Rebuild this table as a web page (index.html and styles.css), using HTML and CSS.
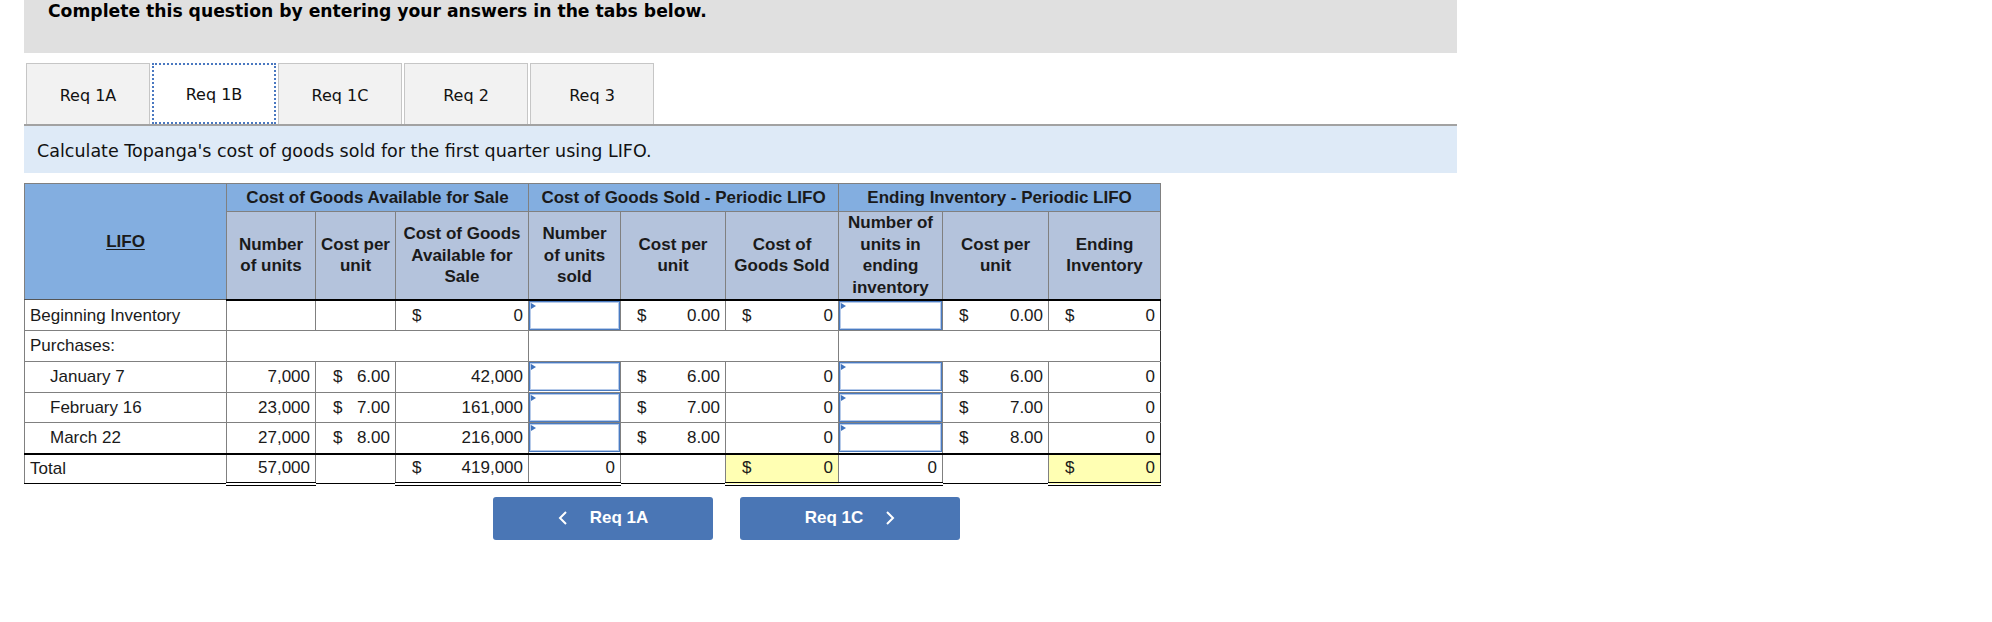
FILE: index.html
```html
<!DOCTYPE html>
<html>
<head>
<meta charset="utf-8">
<link rel="stylesheet" href="styles.css">
</head>
<body>
<div class="page">
  <div class="banner"><h1 class="title">Complete this question by entering your answers in the tabs below.</h1></div>
  <div class="tabs">
    <div class="tab">Req 1A</div>
    <div class="tab active">Req 1B</div>
    <div class="tab">Req 1C</div>
    <div class="tab">Req 2</div>
    <div class="tab">Req 3</div>
  </div>
  <div class="instr">Calculate Topanga's cost of goods sold for the first quarter using LIFO.</div>

  <table class="grid">
    <colgroup>
      <col class="c-label"><col class="c-u1"><col class="c-p1"><col class="c-a1">
      <col class="c-u2"><col class="c-p2"><col class="c-a2">
      <col class="c-u3"><col class="c-p3"><col class="c-a3">
    </colgroup>
    <thead>
      <tr class="grp">
        <th rowspan="2" class="lifo"><u>LIFO</u></th>
        <th colspan="3">Cost of Goods Available for Sale</th>
        <th colspan="3">Cost of Goods Sold - Periodic LIFO</th>
        <th colspan="3">Ending Inventory - Periodic LIFO</th>
      </tr>
      <tr class="sub">
        <th>Number<br>of units</th>
        <th>Cost per<br>unit</th>
        <th>Cost of Goods<br>Available for<br>Sale</th>
        <th>Number<br>of units<br>sold</th>
        <th>Cost per<br>unit</th>
        <th>Cost of<br>Goods Sold</th>
        <th>Number of<br>units in<br>ending<br>inventory</th>
        <th>Cost per<br>unit</th>
        <th>Ending<br>Inventory</th>
      </tr>
    </thead>
    <tbody>
      <tr class="row">
        <td class="lbl">Beginning Inventory</td>
        <td class="sep"></td>
        <td></td>
        <td><div class="m"><span>$</span><span>0</span></div></td>
        <td class="sep inp"><div class="field"></div></td>
        <td><div class="m"><span>$</span><span>0.00</span></div></td>
        <td><div class="m"><span>$</span><span>0</span></div></td>
        <td class="sep inp"><div class="field"></div></td>
        <td><div class="m"><span>$</span><span>0.00</span></div></td>
        <td class="last"><div class="m"><span>$</span><span>0</span></div></td>
      </tr>
      <tr class="row">
        <td class="lbl">Purchases:</td>
        <td class="sep" colspan="3"></td>
        <td class="sep" colspan="3"></td>
        <td class="sep last" colspan="3"></td>
      </tr>
      <tr class="row">
        <td class="lbl ind">January 7</td>
        <td class="sep num">7,000</td>
        <td><div class="m m-near"><span>$</span><span>6.00</span></div></td>
        <td class="num">42,000</td>
        <td class="sep inp"><div class="field"></div></td>
        <td><div class="m"><span>$</span><span>6.00</span></div></td>
        <td class="num">0</td>
        <td class="sep inp"><div class="field"></div></td>
        <td><div class="m"><span>$</span><span>6.00</span></div></td>
        <td class="num last">0</td>
      </tr>
      <tr class="row">
        <td class="lbl ind">February 16</td>
        <td class="sep num">23,000</td>
        <td><div class="m m-near"><span>$</span><span>7.00</span></div></td>
        <td class="num">161,000</td>
        <td class="sep inp"><div class="field"></div></td>
        <td><div class="m"><span>$</span><span>7.00</span></div></td>
        <td class="num">0</td>
        <td class="sep inp"><div class="field"></div></td>
        <td><div class="m"><span>$</span><span>7.00</span></div></td>
        <td class="num last">0</td>
      </tr>
      <tr class="row">
        <td class="lbl ind">March 22</td>
        <td class="sep num">27,000</td>
        <td><div class="m m-near"><span>$</span><span>8.00</span></div></td>
        <td class="num">216,000</td>
        <td class="sep inp"><div class="field"></div></td>
        <td><div class="m"><span>$</span><span>8.00</span></div></td>
        <td class="num">0</td>
        <td class="sep inp"><div class="field"></div></td>
        <td><div class="m"><span>$</span><span>8.00</span></div></td>
        <td class="num last">0</td>
      </tr>
      <tr class="row total">
        <td class="lbl">Total</td>
        <td class="sep num dbl">57,000</td>
        <td class="sgl"></td>
        <td class="dbl"><div class="m"><span>$</span><span>419,000</span></div></td>
        <td class="sep num dbl">0</td>
        <td class="sgl"></td>
        <td class="dbl hl"><div class="m"><span>$</span><span>0</span></div></td>
        <td class="sep num dbl">0</td>
        <td class="sgl"></td>
        <td class="dbl hl last"><div class="m"><span>$</span><span>0</span></div></td>
      </tr>
    </tbody>
  </table>

  <div class="nav">
    <div class="btn"><svg class="chev" width="10" height="14" viewBox="0 0 10 14"><polyline points="8,1 2,7 8,13" fill="none" stroke="#fff" stroke-width="2"/></svg><span>Req 1A</span></div>
    <div class="btn"><span>Req 1C</span><svg class="chev" width="10" height="14" viewBox="0 0 10 14"><polyline points="2,1 8,7 2,13" fill="none" stroke="#fff" stroke-width="2"/></svg></div>
  </div>
</div>
</body>
</html>
```
FILE: styles.css
```css
html, body {
  margin: 0;
  padding: 0;
  background: #fff;
}

.page {
  margin-left: 24px;
  width: 1433px;
}

.banner {
  background: #e0e0e0;
  height: 53px;
  padding: 1px 24px 0;
  box-sizing: border-box;
}

.title {
  margin: 0;
  font-family: "DejaVu Sans", Verdana, sans-serif;
  font-weight: bold;
  font-size: 17.2px;
  line-height: 20px;
  color: #000;
}

.tabs {
  display: flex;
  gap: 2px;
  margin-top: 10px;
  padding-left: 2px;
  border-bottom: 2px solid #a2a2a2;
}

.tab {
  width: 124px;
  height: 61px;
  box-sizing: border-box;
  background: #f2f2f2;
  border: 1px solid #c6c6c6;
  border-bottom: 0;
  display: flex;
  align-items: center;
  justify-content: center;
  padding-top: 2px;
  font-family: "DejaVu Sans", Verdana, sans-serif;
  font-size: 16px;
  color: #111;
}

.tab.active {
  background: #fff;
  border: 2px dotted #4a78c0;
}

.instr {
  background: #deeaf7;
  height: 47px;
  box-sizing: border-box;
  padding: 3px 0 0 13px;
  display: flex;
  align-items: center;
  font-family: "DejaVu Sans", Verdana, sans-serif;
  font-size: 17.5px;
  color: #111;
}

.grid {
  margin-top: 10px;
  border-collapse: collapse;
  table-layout: fixed;
  width: 1136px;
  font-family: "Liberation Sans", Arial, sans-serif;
  font-size: 17px;
  line-height: 21.7px;
  color: #1a1a1a;
}

.c-label { width: 202px; }
.c-u1 { width: 89px; }
.c-p1 { width: 80px; }
.c-a1 { width: 133px; }
.c-u2 { width: 92px; }
.c-p2 { width: 105px; }
.c-a2 { width: 113px; }
.c-u3 { width: 104px; }
.c-p3 { width: 106px; }
.c-a3 { width: 112px; }

.grid th,
.grid td {
  border: 1px solid #808080;
  padding: 0 5px;
}

.grid th {
  font-weight: bold;
  text-align: center;
  vertical-align: middle;
}

.grp th {
  background: #83aee0;
  height: 27px;
}

.grp th.lifo {
  border-bottom: 1px solid #555;
}

.lifo u {
  text-decoration-thickness: 1px;
  text-underline-offset: 2px;
}

.sub th {
  background: #b4c3dc;
  height: 86px;
  padding: 0 2px;
  border-bottom: 2px solid #000;
}

.row td {
  height: 29.6px;
  vertical-align: middle;
}

.row.total td {
  height: 27px;
}

.lbl {
  text-align: left;
}

.lbl.ind {
  padding-left: 25px;
}

.num {
  text-align: right;
}

.grid td.sep {
  border-left: 1px solid #000;
}

.grid td.last {
  border-right: 1px solid #333;
}

.m {
  display: flex;
  justify-content: space-between;
  padding-left: 11px;
}

.m.m-near {
  padding-left: 12px;
}

.grid td.inp {
  padding: 0;
}

.field {
  position: relative;
  height: 29px;
  box-sizing: border-box;
  border: 1px solid #4a7bc1;
  box-shadow: inset 0 0 0 1px #b6cae9;
  background: #fff;
}

.field::before {
  content: "";
  position: absolute;
  left: 1px;
  top: 1px;
  border-top: 3px solid transparent;
  border-bottom: 3px solid transparent;
  border-left: 5px solid #3f73bd;
}

.total td {
  border-top: 2px solid #000;
}

.grid td.dbl {
  border-bottom: 4px double #000;
}

.grid td.sgl,
.total td.lbl {
  border-bottom: 1px solid #000;
}

.hl {
  background: #ffffb3;
}

.nav {
  display: flex;
  gap: 27px;
  margin: 11px 0 0 469px;
}

.btn {
  width: 220px;
  height: 43px;
  background: #4a76b5;
  border-radius: 3px;
  color: #fff;
  display: flex;
  align-items: center;
  justify-content: center;
  gap: 22px;
  font-family: "Liberation Sans", Arial, sans-serif;
  font-weight: bold;
  font-size: 17px;
}

.chev {
  display: block;
}
```
